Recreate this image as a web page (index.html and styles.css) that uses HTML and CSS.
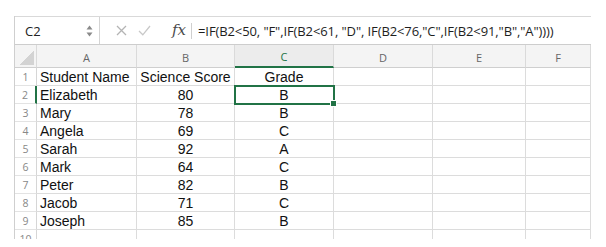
FILE: index.html
```html
<!DOCTYPE html>
<html lang="en">
<head>
<meta charset="utf-8">
<title>Sheet</title>
<link rel="stylesheet" href="styles.css">
</head>
<body>
<div class="sheet">
  <div class="fbar">
    <div class="namebox">
      <span class="ref">C2</span>
      <svg class="spin" width="7" height="12" viewBox="0 0 7 12"><path d="M3.5 0.5 L6.5 4.5 L0.5 4.5 Z M3.5 11.5 L6.5 7.5 L0.5 7.5 Z" fill="#8a8a8a"/></svg>
    </div>
    <div class="tools">
      <svg class="cancel" width="11" height="11" viewBox="0 0 11 11"><path d="M1 1 L10 10 M10 1 L1 10" stroke="#b4b4b4" stroke-width="1.3" fill="none"/></svg>
      <svg class="enter" width="13" height="11" viewBox="0 0 13 11"><path d="M1 6 L4.8 9.8 L12 1" stroke="#c8c8c8" stroke-width="1.3" fill="none"/></svg>
      <span class="fx">fx</span>
      <span class="sep"></span>
    </div>
    <div class="formula">=IF(B2&lt;50, "F",IF(B2&lt;61, "D", IF(B2&lt;76,"C",IF(B2&lt;91,"B","A"))))</div>
  </div>
  <div class="grid">
    <div class="corner"></div>
    <div class="ch">A</div>
    <div class="ch">B</div>
    <div class="ch sel">C</div>
    <div class="ch">D</div>
    <div class="ch">E</div>
    <div class="ch">F</div>

    <div class="rh">1</div><div class="c l">Student Name</div><div class="c">Science Score</div><div class="c">Grade</div><div class="c"></div><div class="c"></div><div class="c"></div>
    <div class="rh sel">2</div><div class="c l">Elizabeth</div><div class="c">80</div><div class="c active">B</div><div class="c"></div><div class="c"></div><div class="c"></div>
    <div class="rh">3</div><div class="c l">Mary</div><div class="c">78</div><div class="c">B</div><div class="c"></div><div class="c"></div><div class="c"></div>
    <div class="rh">4</div><div class="c l">Angela</div><div class="c">69</div><div class="c">C</div><div class="c"></div><div class="c"></div><div class="c"></div>
    <div class="rh">5</div><div class="c l">Sarah</div><div class="c">92</div><div class="c">A</div><div class="c"></div><div class="c"></div><div class="c"></div>
    <div class="rh">6</div><div class="c l">Mark</div><div class="c">64</div><div class="c">C</div><div class="c"></div><div class="c"></div><div class="c"></div>
    <div class="rh">7</div><div class="c l">Peter</div><div class="c">82</div><div class="c">B</div><div class="c"></div><div class="c"></div><div class="c"></div>
    <div class="rh">8</div><div class="c l">Jacob</div><div class="c">71</div><div class="c">C</div><div class="c"></div><div class="c"></div><div class="c"></div>
    <div class="rh">9</div><div class="c l">Joseph</div><div class="c">85</div><div class="c">B</div><div class="c"></div><div class="c"></div><div class="c"></div>
    <div class="rh">10</div><div class="c l"></div><div class="c"></div><div class="c"></div><div class="c"></div><div class="c"></div><div class="c"></div>
  </div>
</div>
</body>
</html>
```

FILE: styles.css
```css
html, body {
  margin: 0;
  padding: 0;
  background: #ffffff;
}

.sheet {
  margin: 16px 0 0 14px;
  width: 577px;
  border-left: 1px solid #cfcfcf;
  box-sizing: border-box;
}

.fbar {
  height: 29px;
  box-sizing: border-box;
  border-top: 1px solid #d9d9d9;
  border-bottom: 1px solid #cdcdcd;
  display: flex;
  align-items: center;
}

.namebox {
  width: 85px;
  height: 100%;
  box-sizing: border-box;
  border-right: 1px solid #d4d4d4;
  display: flex;
  align-items: center;
  justify-content: space-between;
  padding: 0 6px 0 10px;
}

.ref {
  font-family: "Open Sans", "Liberation Sans", sans-serif;
  font-size: 13px;
  color: #222;
}

.tools {
  display: flex;
  align-items: center;
  padding-left: 16px;
  height: 100%;
}

.cancel { margin-right: 11px; }
.enter { margin-right: 21px; }

.fx {
  font-family: "DejaVu Serif", "Liberation Serif", serif;
  font-style: italic;
  font-size: 15px;
  color: #4a4a4a;
  margin-right: 5px;
  line-height: 1;
}

.sep {
  width: 1px;
  height: 16px;
  background: #cfcfcf;
  margin-right: 6px;
}

.formula {
  font-family: "Open Sans", "Liberation Sans", sans-serif;
  font-size: 13px;
  color: #1e1e1e;
  white-space: nowrap;
  letter-spacing: -0.1px;
}

.grid {
  display: grid;
  grid-template-columns: 22px 100px 98px 99px 99px 93px 65px;
  grid-template-rows: 23px repeat(10, 18px);
  height: 194px;
  overflow: hidden;
  background: #fff;
}

.corner,
.ch {
  background: #f4f4f4;
  border-right: 1px solid #dadada;
  border-bottom: 1px solid #cfcfcf;
  box-sizing: border-box;
}

.corner {
  background:
    linear-gradient(to bottom right, transparent 50%, #d3d3d3 50%) right 2px bottom 2px / 15px 15px no-repeat,
    #f4f4f4;
}

.ch {
  display: flex;
  align-items: center;
  justify-content: center;
  font-family: "Open Sans", "Liberation Sans", sans-serif;
  font-size: 11px;
  color: #666;
  padding-top: 2px;
}

.ch.sel {
  color: #217346;
  background: #ececec;
  border-bottom: 2px solid #217346;
}

.rh {
  display: flex;
  align-items: center;
  justify-content: center;
  font-family: "Open Sans", "Liberation Sans", sans-serif;
  font-size: 10.5px;
  color: #888;
  border-right: 1px solid #d6d6d6;
  border-bottom: 1px solid #e3e3e3;
  box-sizing: border-box;
  background: #fff;
}

.rh.sel {
  border-right: 2px solid #217346;
}

.c {
  font-family: "Liberation Sans", Arial, sans-serif;
  font-size: 14px;
  color: #111;
  border-right: 1px solid #dcdcdc;
  border-bottom: 1px solid #dcdcdc;
  box-sizing: border-box;
  display: flex;
  align-items: center;
  justify-content: center;
  line-height: 1;
  white-space: nowrap;
}

.c.l {
  justify-content: flex-start;
  padding-left: 3px;
}

.c.active {
  position: relative;
  outline: 2px solid #217346;
  outline-offset: -1px;
}

.c.active::after {
  content: "";
  position: absolute;
  right: -4px;
  bottom: -4px;
  width: 5px;
  height: 5px;
  background: #217346;
  border: 1px solid #fff;
}
```
